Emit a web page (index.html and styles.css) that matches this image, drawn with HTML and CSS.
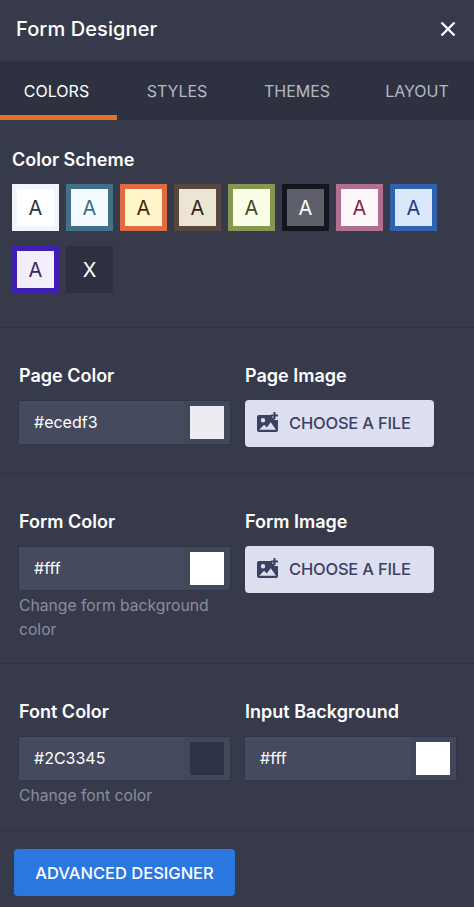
FILE: index.html
```html
<!DOCTYPE html>
<html lang="en">
<head>
<meta charset="utf-8">
<title>Form Designer</title>
<link rel="stylesheet" href="styles.css">
</head>
<body>
<div class="panel">
  <header class="head">
    <h1 class="title">Form Designer</h1>
    <svg class="close" viewBox="0 0 16 16" width="16" height="16" aria-label="Close"><path d="M1.500 1.500 14.500 14.500M14.500 1.500 1.500 14.500" stroke="#fff" stroke-width="2.300" fill="none"/></svg>
  </header>
  <nav class="tabs">
    <div class="tab active">COLORS</div>
    <div class="tab">STYLES</div>
    <div class="tab">THEMES</div>
    <div class="tab">LAYOUT</div>
  </nav>
  <section class="scheme">
    <div class="label">Color Scheme</div>
    <div class="swatches">
      <div class="sw s1">A</div>
      <div class="sw s2">A</div>
      <div class="sw s3">A</div>
      <div class="sw s4">A</div>
      <div class="sw s5">A</div>
      <div class="sw s6">A</div>
      <div class="sw s7">A</div>
      <div class="sw s8">A</div>
      <div class="sw s9">A</div>
      <div class="sw s10">X</div>
    </div>
  </section>
  <section class="row r1">
    <div class="col">
      <div class="label">Page Color</div>
      <div class="field"><span>#ecedf3</span><div class="pick"><i class="chip c-page"></i></div></div>
    </div>
    <div class="col">
      <div class="label">Page Image</div>
      <div class="file">
        <svg class="ico" viewBox="0 0 22 20" width="22" height="20"><path fill-rule="evenodd" d="M2 3h13v2.500h2.500V8H21v10a2 2 0 0 1-2 2H2a2 2 0 0 1-2-2V5a2 2 0 0 1 2-2Zm4 3a2.200 2.200 0 1 0 0 4.400A2.200 2.200 0 0 0 6 6ZM2.200 17.800h16.800l-5.300-7.600-3.900 5.200-2.700-2.600Z"/><path d="M17.500 0v7M14 3.500h7" stroke="#3c4162" stroke-width="2" fill="none"/></svg>
        <span>CHOOSE A FILE</span>
      </div>
    </div>
  </section>
  <section class="row r2">
    <div class="col">
      <div class="label">Form Color</div>
      <div class="field"><span>#fff</span><div class="pick"><i class="chip c-white"></i></div></div>
      <p class="hint">Change form background color</p>
    </div>
    <div class="col">
      <div class="label">Form Image</div>
      <div class="file">
        <svg class="ico" viewBox="0 0 22 20" width="22" height="20"><path fill-rule="evenodd" d="M2 3h13v2.500h2.500V8H21v10a2 2 0 0 1-2 2H2a2 2 0 0 1-2-2V5a2 2 0 0 1 2-2Zm4 3a2.200 2.200 0 1 0 0 4.400A2.200 2.200 0 0 0 6 6ZM2.200 17.800h16.800l-5.300-7.600-3.900 5.200-2.700-2.600Z"/><path d="M17.500 0v7M14 3.500h7" stroke="#3c4162" stroke-width="2" fill="none"/></svg>
        <span>CHOOSE A FILE</span>
      </div>
    </div>
  </section>
  <section class="row r3">
    <div class="col">
      <div class="label">Font Color</div>
      <div class="field"><span>#2C3345</span><div class="pick"><i class="chip c-font"></i></div></div>
      <p class="hint">Change font color</p>
    </div>
    <div class="col">
      <div class="label">Input Background</div>
      <div class="field"><span>#fff</span><div class="pick"><i class="chip c-white"></i></div></div>
    </div>
  </section>
  <footer class="foot"><div class="adv">ADVANCED DESIGNER</div></footer>
</div>
</body>
</html>
```
FILE: styles.css
```css
* { box-sizing: border-box; }
html, body { margin: 0; padding: 0; }
body { background: #373a4b; font-family: "Inter", "Liberation Sans", sans-serif; color: #fff; }
.panel { width: 474px; height: 907px; overflow: hidden; background: #373a4b; }
.head { height: 61px; display: flex; align-items: center; justify-content: space-between; padding: 0 18px 3px 16px; }
.title { margin: 0; font-size: 20px; font-weight: 500; letter-spacing: 0.1px; }
.tabs { height: 59px; background: #2e3140; display: flex; }
.tab { width: 120px; flex: none; text-align: center; font-size: 16px; line-height: 61px; color: #b4b8c8; }
.tab.active { width: 117px; color: #fff; padding-right: 4px; border-bottom: 5px solid #e5702d; }
.label { font-size: 18px; font-weight: 600; line-height: 22px; color: #fff; }
.scheme { height: 208px; padding: 29px 12px 0; border-bottom: 1px solid #303343; }
.swatches { display: flex; flex-wrap: wrap; gap: 15px 7px; margin-top: 13px; width: 440px; }
.sw { width: 47px; height: 47px; border: 5px solid; display: flex; align-items: center; justify-content: center; font-size: 20px; }
.s1 { border-color: #f3f5fc; background: #fff; color: #2c3345; }
.s2 { border-color: #417088; background: #f4fbfe; color: #386d88; }
.s3 { border-color: #e06b40; background: #fef6c8; color: #4a2208; }
.s4 { border-color: #55483f; background: #ece4d4; color: #2c2620; }
.s5 { border-color: #84994f; background: #fbfee6; color: #3f4a2a; }
.s6 { border-color: #14161f; background: #5d5f69; color: #fff; }
.s7 { border-color: #b06f8c; background: #fdf9fb; color: #8c2346; }
.s8 { border-color: #2f62ad; background: #dbe8fc; color: #1d3d7c; }
.s9 { border-color: #3f1fb0; background: #f2effb; color: #372760; }
.s10 { border-color: #2d3040; background: #2d3040; color: #fff; }
.row { display: grid; grid-template-columns: 211px 211px; column-gap: 15px; padding: 36.500px 0 0 19px; border-bottom: 1px solid #303343; }
.r1 { height: 146px; }
.r2 { height: 190px; }
.r3 { height: 167px; }
.field { margin-top: 14.500px; height: 43px; background: #454a5e; display: flex; align-items: center; justify-content: space-between; font-size: 16px; color: #fff; box-shadow: 0 0 0 1px #31354a; }
.field span { padding: 0 0 1px 15px; }
.pick { width: 46px; height: 43px; padding: 4.500px 6px 4px 6px; background: #43475a; }
.chip { display: block; width: 34px; height: 33.500px; }
.c-page { background: #ecedf3; }
.c-white { background: #fff; }
.c-font { background: #2f3347; }
.file { margin-top: 13.500px; width: 188.500px; height: 47px; background: #dcdff0; border-radius: 4px; display: flex; align-items: center; gap: 10px; padding: 0 0 1px 12px; color: #3c4162; font-size: 16.500px; font-weight: 500; letter-spacing: -0.2px; }
.ico { fill: #3c4162; flex: none; margin-top: -3px; }
.hint { margin: 4px 0 0; font-size: 15.700px; line-height: 24px; color: #8a8e9f; }
.foot { padding: 18px 0 0 14px; }
.adv { width: 221px; height: 47px; border-radius: 4px; background: #2b77e0; color: #fff; font-size: 16.500px; font-weight: 500; line-height: 48px; text-align: center; }
```
